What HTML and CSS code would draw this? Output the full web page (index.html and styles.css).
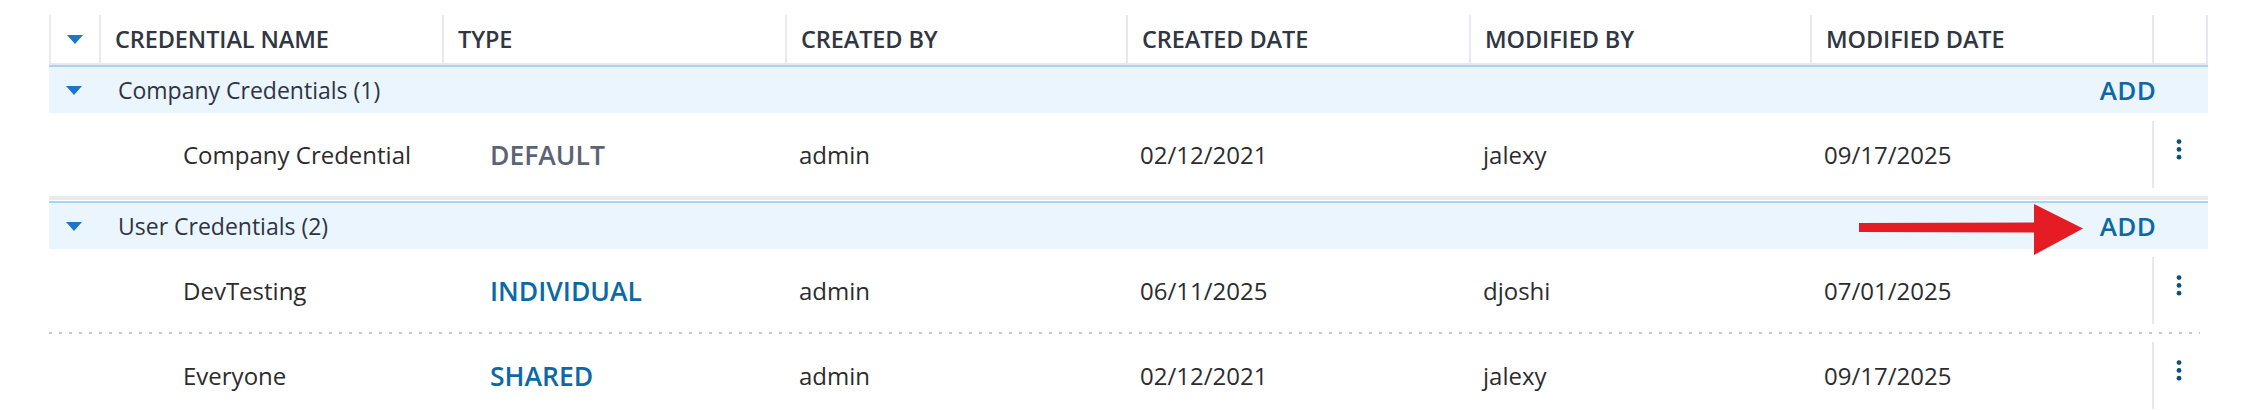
FILE: index.html
```html
<!DOCTYPE html>
<html lang="en">
<head>
<meta charset="utf-8">
<title>Credentials</title>
<link rel="stylesheet" href="styles.css">
</head>
<body>
<div class="table">
  <div class="row head">
    <div class="cell c-toggle"><svg class="tri" width="16" height="9" viewBox="0 0 16 9"><polygon points="0,0 16,0 8,9"/></svg></div>
    <div class="cell">CREDENTIAL NAME</div>
    <div class="cell">TYPE</div>
    <div class="cell">CREATED BY</div>
    <div class="cell">CREATED DATE</div>
    <div class="cell">MODIFIED BY</div>
    <div class="cell">MODIFIED DATE</div>
    <div class="cell c-act"></div>
  </div>

  <section class="group">
    <div class="group-head">
      <div class="g-toggle"><svg class="tri" width="16" height="9" viewBox="0 0 16 9"><polygon points="0,0 16,0 8,9"/></svg></div>
      <span class="g-title">Company Credentials (1)</span>
      <span class="add">ADD</span>
    </div>
    <div class="row data">
      <div class="cell"></div>
      <div class="cell d-name">Company Credential</div>
      <div class="cell d-type t-default">DEFAULT</div>
      <div class="cell">admin</div>
      <div class="cell">02/12/2021</div>
      <div class="cell">jalexy</div>
      <div class="cell">09/17/2025</div>
      <div class="cell d-act"><div class="act-inner"><svg class="kebab" width="6" height="22" viewBox="0 0 6 22"><circle cx="3" cy="2.6" r="2.4"/><circle cx="3" cy="10.4" r="2.4"/><circle cx="3" cy="18.2" r="2.4"/></svg></div></div>
    </div>
  </section>

  <section class="group">
    <div class="group-head">
      <div class="g-toggle"><svg class="tri" width="16" height="9" viewBox="0 0 16 9"><polygon points="0,0 16,0 8,9"/></svg></div>
      <span class="g-title">User Credentials (2)</span>
      <span class="add">ADD</span>
      <svg class="annot" width="224" height="51" viewBox="0 0 224 51"><polygon points="0,19 175,18.5 175,0 224,24.5 175,51 175,28.5 0,28"/></svg>
    </div>
    <div class="row data">
      <div class="cell"></div>
      <div class="cell d-name">DevTesting</div>
      <div class="cell d-type t-blue">INDIVIDUAL</div>
      <div class="cell">admin</div>
      <div class="cell">06/11/2025</div>
      <div class="cell">djoshi</div>
      <div class="cell">07/01/2025</div>
      <div class="cell d-act"><div class="act-inner"><svg class="kebab" width="6" height="22" viewBox="0 0 6 22"><circle cx="3" cy="2.6" r="2.4"/><circle cx="3" cy="10.4" r="2.4"/><circle cx="3" cy="18.2" r="2.4"/></svg></div></div>
    </div>
    <div class="row data">
      <div class="cell"></div>
      <div class="cell d-name">Everyone</div>
      <div class="cell d-type t-blue">SHARED</div>
      <div class="cell">admin</div>
      <div class="cell">02/12/2021</div>
      <div class="cell">jalexy</div>
      <div class="cell">09/17/2025</div>
      <div class="cell d-act"><div class="act-inner"><svg class="kebab" width="6" height="22" viewBox="0 0 6 22"><circle cx="3" cy="2.6" r="2.4"/><circle cx="3" cy="10.4" r="2.4"/><circle cx="3" cy="18.2" r="2.4"/></svg></div></div>
    </div>
  </section>
</div>
</body>
</html>
```

FILE: styles.css
```css
html, body {
  margin: 0;
  padding: 0;
  background: #ffffff;
}

body {
  font-family: "Open Sans", "Liberation Sans", sans-serif;
  color: #2e2e30;
}

.table {
  width: 2159px;
  margin: 15px 0 0 49px;
}

.row {
  display: grid;
  grid-template-columns: 50px 343px 343px 341px 343px 341px 342px 56px;
}

/* header */
.head {
  height: 48px;
  border-bottom: 2px solid #e8e9ee;
}

.head .cell {
  display: flex;
  align-items: center;
  border-left: 2px solid #e8e9ee;
  padding-left: 14px;
  font-size: 23.5px;
  font-weight: 600;
  color: #303642;
  letter-spacing: -0.1px;
}

.head .c-toggle {
  justify-content: center;
  padding-left: 0;
}

.head .c-act {
  border-right: 2px solid #e8e9ee;
}

.tri {
  display: block;
  fill: #1c75c6;
}

/* group */
.group + .group {
  border-top: 4px solid #eaebef;
  padding-top: 1px;
}

.group-head {
  position: relative;
  display: flex;
  align-items: center;
  height: 46px;
  background: #eaf5fe;
  border-top: 2px solid #a5d4f8;
}

.g-toggle {
  width: 50px;
  display: flex;
  justify-content: center;
  padding-top: 1px;
}

.g-title {
  padding-left: 19px;
  font-size: 23px;
  font-weight: 500;
  color: #2f3441;
}

.add {
  margin-left: auto;
  padding-right: 52px;
  font-size: 26px;
  font-weight: 600;
  color: #0b69a7;
  letter-spacing: 0.3px;
}

.annot {
  position: absolute;
  left: 1810px;
  top: 1px;
  fill: #e31d23;
}

/* data rows */
.data {
  height: 83px;
}

.data + .data {
  height: 83px;
  padding-top: 2px;
  background-image: repeating-linear-gradient(90deg, #c6c8d0 0 3px, transparent 3px 10px);
  background-size: 2151px 2px;
  background-repeat: no-repeat;
  background-position: 0 0;
}

.data .cell {
  display: flex;
  align-items: center;
  padding-left: 14px;
  font-size: 24px;
  color: #2c2c2e;
}

.data .d-name {
  padding-left: 84px;
}

.data .d-type {
  padding-left: 48px;
  font-size: 26.5px;
  font-weight: 600;
}

.data .t-default {
  color: #5b6477;
}

.data .t-blue {
  color: #0b69a7;
}

.data .d-act {
  padding-left: 0;
  align-items: stretch;
}

.act-inner {
  flex: 1;
  margin: 8px 0;
  border-left: 2px solid #e8e9ee;
  padding: 18px 0 0 22px;
}

.kebab {
  display: block;
  fill: #0c4f82;
}
```
